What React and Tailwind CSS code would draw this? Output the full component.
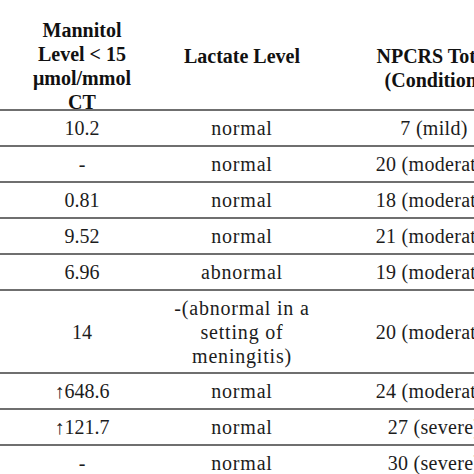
const rows = [
  { m: '10.2', l: 'normal', n: '7 (mild)' },
  { m: '-', l: 'normal', n: '20 (moderate)' },
  { m: '0.81', l: 'normal', n: '18 (moderate)' },
  { m: '9.52', l: 'normal', n: '21 (moderate)' },
  { m: '6.96', l: 'abnormal', n: '19 (moderate)' },
  { m: '14', l: null, n: '20 (moderate)', tall: true },
  { m: '↑648.6', l: 'normal', n: '24 (moderate)' },
  { m: '↑121.7', l: 'normal', n: '27 (severe)' },
  { m: '-', l: 'normal', n: '30 (severe)' },
]

export default function App() {
  return (
    <div className="w-[474px] h-[474px] overflow-hidden bg-white text-[#1c1c1c] font-['Liberation_Serif','Times_New_Roman',serif]">
      <div className="w-[548px] text-[20px] leading-[24px]">
        {/* header */}
        <div className="grid grid-cols-[164px_156px_228px] h-[111px] border-b-2 border-[#6f6f6f] font-bold text-[#111] text-center">
          <div className="pt-[18px] h-[109px]">
            Mannitol<br />Level &lt; 15<br />μmol/mmol<br />CT
          </div>
          <div className="pt-[44px]">Lactate Level</div>
          <div className="pt-[44px]">NPCRS Total<br />(Condition)</div>
        </div>

        {/* rows */}
        {rows.map((r, i) => (
          <div key={i}
               className={`grid grid-cols-[164px_156px_228px] items-center text-center border-b-2 border-[#6f6f6f] ${r.tall ? 'h-[83px]' : 'h-[36px]'}`}>
            <div>{r.m}</div>
            <div className="tracking-[0.8px]">
              {r.l ?? (<>-(abnormal in a<br />setting of<br />meningitis)</>)}
            </div>
            <div className="whitespace-nowrap tracking-[0.3px]">{r.n}</div>
          </div>
        ))}
      </div>
    </div>
  )
}
